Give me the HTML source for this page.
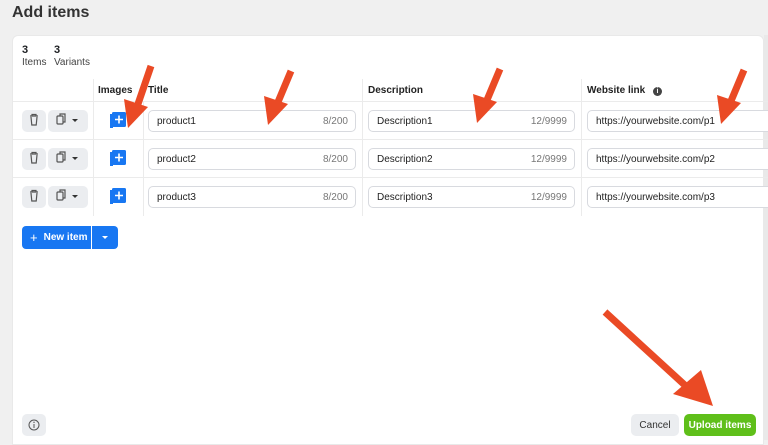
<!DOCTYPE html>
<html><head><style>
*{box-sizing:border-box;margin:0;padding:0}
body{width:768px;height:440px;background:#f0f0f0;font-family:"Liberation Sans",Arial,sans-serif;color:#1c1e21;position:relative;overflow:hidden}
.abs{position:absolute}
h1{position:absolute;left:12px;top:4px;font-size:16px;font-weight:bold;color:#333}
.card{position:absolute;left:12px;top:35px;width:752px;height:410px;background:#fff;border-radius:6px 6px 0 0;border:1px solid #e9e9e9}
.num{font-size:11px;font-weight:bold}
.lbl{font-size:10px;color:#444}
.th{font-size:10px;font-weight:bold;color:#222}
.inp{position:absolute;height:22px;border:1px solid #d8dadf;border-radius:5px;font-size:10px;display:flex;align-items:center;padding-left:8px;background:#fff;color:#222}
.cnt{position:absolute;right:7px;color:#777}
.gbtn{position:absolute;background:#ebedf0;border-radius:5px;display:flex;align-items:center;justify-content:center}
.hl{position:absolute;left:13px;width:755px;height:1px;background:#ebebeb}
.vl{position:absolute;width:1px;background:#ebebeb}
</style></head><body>
<h1>Add items</h1>
<div class="card"></div>
<div class="abs" style="left:764px;top:35px;width:4px;height:405px;background:#e9e9e9"></div>
<div class="abs num" style="left:22px;top:44px">3</div>
<div class="abs lbl" style="left:22px;top:57px">Items</div>
<div class="abs num" style="left:54px;top:44px">3</div>
<div class="abs lbl" style="left:54px;top:57px">Variants</div>
<div class="vl" style="left:93px;top:79px;height:137px"></div>
<div class="vl" style="left:143px;top:101px;height:115px"></div>
<div class="vl" style="left:362px;top:79px;height:137px"></div>
<div class="vl" style="left:581px;top:79px;height:137px"></div>
<div class="hl" style="top:101px"></div>
<div class="hl" style="top:139px"></div>
<div class="hl" style="top:177px"></div>
<div class="abs th" style="left:98px;top:85px">Images</div>
<div class="abs th" style="left:148px;top:85px">Title</div>
<div class="abs th" style="left:368px;top:85px">Description</div>
<div class="abs th" style="left:587px;top:85px">Website link <span style="display:inline-block;width:9px;height:9px;border-radius:50%;background:#444;color:#fff;font-size:7px;line-height:9px;text-align:center;margin-left:5px">i</span></div>

<div class="gbtn" style="left:22px;top:110px;width:24px;height:22px"></div>
<div class="gbtn" style="left:48px;top:110px;width:40px;height:22px"></div>
<div class="gbtn" style="left:22px;top:148px;width:24px;height:22px"></div>
<div class="gbtn" style="left:48px;top:148px;width:40px;height:22px"></div>
<div class="gbtn" style="left:22px;top:186px;width:24px;height:22px"></div>
<div class="gbtn" style="left:48px;top:186px;width:40px;height:22px"></div>

<svg class="abs" style="left:0;top:0" width="768" height="440">
<g fill="none" stroke="#555" stroke-width="1.2">
<g id="ic"><path d="M30 116h8M32 116v-1.5h4v1.5M31 117l.8 8h4.4l.8-8"/><rect x="57" y="116" width="6" height="8" rx="1"/><path d="M60 116v-2h5v8h-2"/></g>
<use href="#ic" y="38"/><use href="#ic" y="76"/>
</g>
<g fill="#333"><path d="M72 119h6l-3 3z"/><path d="M72 157h6l-3 3z"/><path d="M72 195h6l-3 3z"/></g>
<g id="img"><path d="M110 114h3v14h-3z" fill="#1877f2"/><rect x="112" y="112" width="14" height="15" rx="1.5" fill="#1877f2"/><path d="M119 115.5v8M115 119.5h8" stroke="#fff" stroke-width="1.6"/></g>
<use href="#img" y="38"/><use href="#img" y="76"/>
</svg>

<div class="inp" style="left:148px;top:110px;width:208px">product1<span class="cnt">8/200</span></div>
<div class="inp" style="left:148px;top:148px;width:208px">product2<span class="cnt">8/200</span></div>
<div class="inp" style="left:148px;top:186px;width:208px">product3<span class="cnt">8/200</span></div>
<div class="inp" style="left:368px;top:110px;width:207px">Description1<span class="cnt">12/9999</span></div>
<div class="inp" style="left:368px;top:148px;width:207px">Description2<span class="cnt">12/9999</span></div>
<div class="inp" style="left:368px;top:186px;width:207px">Description3<span class="cnt">12/9999</span></div>
<div class="inp" style="left:587px;top:110px;width:190px">https://yourwebsite.com/p1</div>
<div class="inp" style="left:587px;top:148px;width:190px">https://yourwebsite.com/p2</div>
<div class="inp" style="left:587px;top:186px;width:190px">https://yourwebsite.com/p3</div>

<div class="abs" style="left:22px;top:226px;width:69px;height:23px;background:#1877f2;border-radius:4px 0 0 4px;color:#fff;font-size:10px;font-weight:bold;display:flex;align-items:center;padding-left:8px"><span style="font-weight:normal;font-size:13px;margin-right:6px">+</span>New item</div>
<div class="abs" style="left:92px;top:226px;width:26px;height:23px;background:#1877f2;border-radius:0 4px 4px 0"></div>
<svg class="abs" style="left:92px;top:226px" width="26" height="23"><path d="M10 10h6l-3 3z" fill="#fff"/></svg>

<div class="gbtn" style="left:22px;top:414px;width:24px;height:22px"></div>
<svg class="abs" style="left:22px;top:414px" width="24" height="22"><circle cx="12" cy="11" r="5" fill="none" stroke="#555" stroke-width="1"/><path d="M12 10v4" stroke="#555"/><circle cx="12" cy="8.3" r=".7" fill="#555"/></svg>
<div class="gbtn" style="left:631px;top:414px;width:48px;height:22px;font-size:10px;color:#333">Cancel</div>
<div class="abs" style="left:684px;top:414px;width:72px;height:22px;background:#5fbf1a;border-radius:5px;font-size:10px;font-weight:bold;display:flex;align-items:center;justify-content:center;color:#fff">Upload items</div>

<svg class="abs" style="left:0;top:0" width="768" height="440">
<g stroke="#ea4a25" stroke-width="7" fill="#ea4a25">
<line x1="151" y1="66" x2="138" y2="104"/><path d="M124 99l24 8-20 21z" stroke="none"/>
<line x1="291" y1="71" x2="278" y2="102"/><path d="M264 96l24 8-20 21z" stroke="none"/>
<line x1="500" y1="69" x2="487" y2="100"/><path d="M473 94l24 8-20 21z" stroke="none"/>
<line x1="744" y1="70" x2="731" y2="101"/><path d="M717 95l24 8-20 21z" stroke="none"/>
<line x1="605" y1="312" x2="688" y2="388"/><path d="M673 394l28-24 12 36z" stroke="none"/>
</g></svg>
</body></html>
